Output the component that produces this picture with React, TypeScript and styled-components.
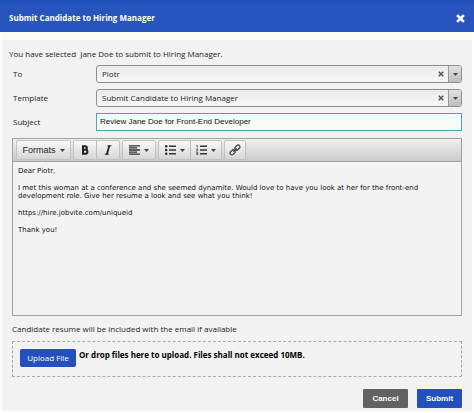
import React from "react";
import styled, { createGlobalStyle, css } from "styled-components";

const GlobalStyle = createGlobalStyle`
  *, *::before, *::after { box-sizing: border-box; }
  body {
    margin: 0;
    background: #fff;
    color: #222;
    font-family: "Open Sans", sans-serif;
    font-size: 8px;
    line-height: 14px;
  }
  button, input, select { margin: 0; font: inherit; color: inherit; }
`;

const Dialog = styled.section`
  display: flex;
  flex-direction: column;
`;

const Header = styled.header`
  display: flex;
  align-items: center;
  justify-content: space-between;
  height: 32px;
  padding: 4px 9px 0;
  background: linear-gradient(#214fbb, #2754bd 8px);
  color: #fff;
`;

const Title = styled.h1`
  margin: 0;
  font-size: 8px;
  line-height: 14px;
  font-weight: 700;
`;

const PlainButton = styled.button`
  display: flex;
  align-items: center;
  justify-content: center;
  padding: 0;
  border: 0;
  background: none;
  cursor: pointer;
`;

const Body = styled.form`
  margin: 0 2px;
  padding: 7px 10px 3px;
  border-top: 8px solid #fcfbf0;
  background: #f2f2f2;
`;

const Intro = styled.p`
  margin: 0 0 4px -3px;
  white-space: pre-wrap;
`;

const Fields = styled.div`
  display: grid;
  grid-template-columns: 84px 1fr;
  grid-auto-rows: 18px;
  row-gap: 6px;
  align-items: center;
`;

const Label = styled.label`
  padding-left: 1px;
`;

const Combo = styled.div`
  display: flex;
  height: 18px;
  overflow: hidden;
  border: 1px solid #8f8f8f;
  border-radius: 3px;
  background: linear-gradient(#ebebeb, #f6f6f6);
`;

const Select = styled.select`
  flex: 1;
  min-width: 0;
  padding: 0 5px;
  border: 0;
  outline: 0;
  appearance: none;
  background: none;
`;

const ClearButton = styled(PlainButton)`
  width: 14px;
`;

const ComboArrow = styled.span`
  display: flex;
  align-items: center;
  justify-content: center;
  width: 13px;
  border-left: 1px solid #999;
  background: linear-gradient(#e2e2e2, #bcbcbc);
  pointer-events: none;
`;

const TextInput = styled.input`
  width: 100%;
  height: 18px;
  padding: 0 3px 2px;
  border: 1px solid #5b9db0;
  outline: 0;
  background: #f7fbf5;
  color: #111;
  font-family: "Liberation Sans", sans-serif;
`;

const Editor = styled.div`
  margin: 7px 0 6px;
  border: 1px solid #a0a0a0;
`;

const Toolbar = styled.div`
  display: flex;
  gap: 2px;
  height: 23px;
  padding: 1px 3px;
  border-bottom: 1px solid #a0a0a0;
  background: linear-gradient(#f0f0f0, #cbcbcb);
`;

const ToolGroup = styled.div`
  display: flex;
  border: 1px solid #c2c2c2;
  border-radius: 2px;
  background: linear-gradient(#f8f8f8, #d6d6d6);
`;

const ToolButton = styled(PlainButton)<{ $width: number }>`
  gap: 4px;
  width: ${(p) => p.$width}px;
  color: #222;
  font-family: "Liberation Sans", sans-serif;
  font-size: 9px;

  & + & { border-left: 1px solid #bbb; }
`;

const Message = styled.div`
  min-height: 153px;
  padding: 5px;
  outline: 0;
  background: #f3f3f3;
  color: #111;
  font-family: "DejaVu Sans", sans-serif;
  font-size: 7px;
  line-height: 8px;

  p { margin: 0 0 9px; }
`;

const Note = styled.p`
  margin: 0 0 5px;
`;

const DropZone = styled.div`
  display: flex;
  align-items: flex-start;
  gap: 3px;
  min-height: 36px;
  padding: 7px;
  border: 1px dashed #aaa;
  color: #000;
`;

const DropText = styled.strong`
  line-height: 11px;
`;

const blue = css`
  background: #2450bf;
`;

const UploadButton = styled(PlainButton)`
  ${blue}
  width: 56px;
  height: 18px;
  border-radius: 2px;
  color: #fff;
`;

const Actions = styled.footer`
  display: flex;
  justify-content: flex-end;
  gap: 9px;
  margin-top: 12px;
`;

const ActionButton = styled(PlainButton)<{ $primary?: boolean }>`
  width: 45px;
  height: 19px;
  border-radius: 1px;
  background: #626262;
  ${(p) => p.$primary && blue}
  color: #fff;
  font-family: "Liberation Sans", sans-serif;
  font-weight: 700;
`;

const Cross = ({ size, color, weight }: { size: number; color: string; weight: number }) => (
  <svg width={size} height={size} viewBox="0 0 8 8" aria-hidden="true">
    <path d="M1 1 7 7M7 1 1 7" stroke={color} strokeWidth={weight} />
  </svg>
);

const Caret = () => (
  <svg width="5" height="3" viewBox="0 0 5 3" aria-hidden="true">
    <path d="M0 0h5L2.5 3z" fill="#444" />
  </svg>
);

const BoldIcon = () => (
  <svg width="8" height="10" viewBox="0 0 8 10" fill="none" stroke="#222" strokeWidth="2" aria-hidden="true">
    <path d="M2 1.2h2.2c2.2 0 2.2 3.5 0 3.5H2zM2 4.7h2.5c2.6 0 2.6 4 0 4H2z" />
  </svg>
);

const ItalicIcon = () => (
  <svg width="8" height="10" viewBox="0 0 8 10" fill="none" stroke="#222" aria-hidden="true">
    <path d="M3.4 .8h4M.8 9.2h4" />
    <path d="M5.4.8 2.8 9.2" strokeWidth="1.8" />
  </svg>
);

const AlignIcon = () => (
  <svg width="11" height="10" viewBox="0 0 11 10" stroke="#333" strokeWidth="1.3" aria-hidden="true">
    <path d="M0 .8h11M0 2.9h8M0 5h11M0 7.1h8M0 9.2h11" />
  </svg>
);

const BulletIcon = () => (
  <svg width="11" height="10" viewBox="0 0 11 10" aria-hidden="true">
    <path d="M4 1.3h7M4 5h7M4 8.7h7" stroke="#333" strokeWidth="1.5" />
    <g fill="#222">
      <circle cx="1.2" cy="1.3" r="1.2" />
      <circle cx="1.2" cy="5" r="1.2" />
      <circle cx="1.2" cy="8.7" r="1.2" />
    </g>
  </svg>
);

const NumberIcon = () => (
  <svg width="11" height="10" viewBox="0 0 11 10" fill="none" stroke="#333" aria-hidden="true">
    <path d="M4 1.3h7M4 5h7M4 8.7h7" strokeWidth="1.5" />
    <path d="M.4.6l.9-.3v2.3M.2 4h1.5v1L.3 6h1.6M.2 7.5h1.6v2.1H.2M.6 8.5h1.2" strokeWidth=".7" />
  </svg>
);

const LinkIcon = () => (
  <svg width="12" height="12" viewBox="0 0 12 12" fill="none" stroke="#444" strokeWidth="1.3" aria-hidden="true">
    <rect x="5.6" y="1.8" width="5.6" height="3.6" rx="1.8" transform="rotate(-45 8.4 3.6)" />
    <rect x=".8" y="6.6" width="5.6" height="3.6" rx="1.8" transform="rotate(-45 3.6 8.4)" />
    <path d="M4.4 7.6l3.2-3.2" />
  </svg>
);

interface ComboFieldProps {
  id: string;
  label: string;
  value: string;
}

const ComboField = ({ id, label, value }: ComboFieldProps) => (
  <>
    <Label htmlFor={id}>{label}</Label>
    <Combo>
      <Select id={id} defaultValue={value}>
        <option>{value}</option>
      </Select>
      <ClearButton type="button" aria-label={`Clear ${label}`}>
        <Cross size={6} color="#555" weight={2} />
      </ClearButton>
      <ComboArrow>
        <Caret />
      </ComboArrow>
    </Combo>
  </>
);

export default function App() {
  return (
    <>
      <GlobalStyle />
      <Dialog role="dialog" aria-labelledby="title">
        <Header>
          <Title id="title">Submit Candidate to Hiring Manager</Title>
          <PlainButton type="button" aria-label="Close">
            <Cross size={9} color="#fff" weight={2.4} />
          </PlainButton>
        </Header>
        <Body onSubmit={(e) => e.preventDefault()}>
          <Intro>{"You have selected  Jane Doe to submit to Hiring Manager."}</Intro>
          <Fields>
            <ComboField id="to" label="To" value="Piotr" />
            <ComboField id="template" label="Template" value="Submit Candidate to Hiring Manager" />
            <Label htmlFor="subject">Subject</Label>
            <TextInput id="subject" type="text" defaultValue="Review Jane Doe for Front-End Developer" />
          </Fields>
          <Editor>
            <Toolbar role="toolbar" aria-label="Formatting">
              <ToolGroup>
                <ToolButton type="button" $width={53}>Formats <Caret /></ToolButton>
              </ToolGroup>
              <ToolGroup>
                <ToolButton type="button" $width={22} aria-label="Bold"><BoldIcon /></ToolButton>
                <ToolButton type="button" $width={23} aria-label="Italic"><ItalicIcon /></ToolButton>
              </ToolGroup>
              <ToolGroup>
                <ToolButton type="button" $width={32} aria-label="Align"><AlignIcon /><Caret /></ToolButton>
              </ToolGroup>
              <ToolGroup>
                <ToolButton type="button" $width={31} aria-label="Bullet list"><BulletIcon /><Caret /></ToolButton>
                <ToolButton type="button" $width={31} aria-label="Numbered list"><NumberIcon /><Caret /></ToolButton>
              </ToolGroup>
              <ToolGroup>
                <ToolButton type="button" $width={20} aria-label="Insert link"><LinkIcon /></ToolButton>
              </ToolGroup>
            </Toolbar>
            <Message
              contentEditable
              suppressContentEditableWarning
              spellCheck={false}
              role="textbox"
              aria-multiline="true"
              aria-label="Message"
            >
              <p>Dear Piotr,</p>
              <p>
                I met this woman at a conference and she seemed dynamite. Would love to have you look at her for
                the front-end development role. Give her resume a look and see what you think!
              </p>
              <p>https://hire.jobvite.com/uniqueid</p>
              <p>Thank you!</p>
            </Message>
          </Editor>
          <Note>Candidate resume will be included with the email if available</Note>
          <DropZone>
            <UploadButton type="button">Upload File</UploadButton>
            <DropText>Or drop files here to upload. Files shall not exceed 10MB.</DropText>
          </DropZone>
          <Actions>
            <ActionButton type="button">Cancel</ActionButton>
            <ActionButton type="submit" $primary>Submit</ActionButton>
          </Actions>
        </Body>
      </Dialog>
    </>
  );
}
